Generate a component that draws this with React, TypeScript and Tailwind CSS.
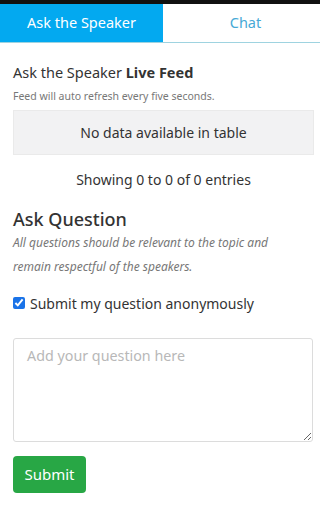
import React from "react";

export default function App() {
  return (
    <div className="w-[320px] h-[520px] bg-white overflow-hidden" style={{ fontFamily: '"Noto Sans", "Open Sans", sans-serif' }}>
      <div className="h-[4px] bg-[#111]" />
      <div className="flex h-[39px] border-b border-[#9ed3e0]">
        <div className="w-[163px] bg-[#03a9f0] text-white text-[14.5px] flex items-center justify-center">Ask the Speaker</div>
        <div className="flex-1 bg-white text-[#47a9d6] text-[14.5px] flex items-center justify-center pl-[8px]">Chat</div>
      </div>
      <div className="pl-[13px] pr-[6px]">
        <div className="mt-[19px] text-[14.5px] text-[#333]">Ask the Speaker <span className="font-bold">Live Feed</span></div>
        <div className="mt-[5px] text-[10.5px] text-[#777]">Feed will auto refresh every five seconds.</div>
        <div className="mt-[5px] h-[45px] bg-[#f2f2f3] border border-[#eaeaea] flex items-center justify-center text-[14px] text-[#333]">No data available in table</div>
        <div className="mt-[14px] text-center text-[14px] text-[#333]">Showing 0 to 0 of 0 entries</div>
        <div className="mt-[17px] text-[18px] font-medium text-[#333] leading-[24px]">Ask Question</div>
        <div className="text-[12px] italic text-[#777] leading-[24px]">All questions should be relevant to the topic and<br />remain respectful of the speakers.</div>
        <label className="mt-[14px] flex items-center gap-[5px] text-[14px] text-[#333]">
          <input type="checkbox" defaultChecked className="w-[12px] h-[12px] accent-[#1a73e8]" />
          Submit my question anonymously
        </label>
        <textarea placeholder="Add your question here" className="mt-[24px] block w-[300px] h-[104px] border border-[#dcdcdc] rounded-[3px] px-[13px] py-[6px] text-[14.3px] placeholder:text-[#b8b8b8] outline-none" />
        <button className="mt-[14px] h-[37px] w-[73px] bg-[#28a745] text-white text-[15px] rounded-[4px]">Submit</button>
      </div>
    </div>
  );
}
